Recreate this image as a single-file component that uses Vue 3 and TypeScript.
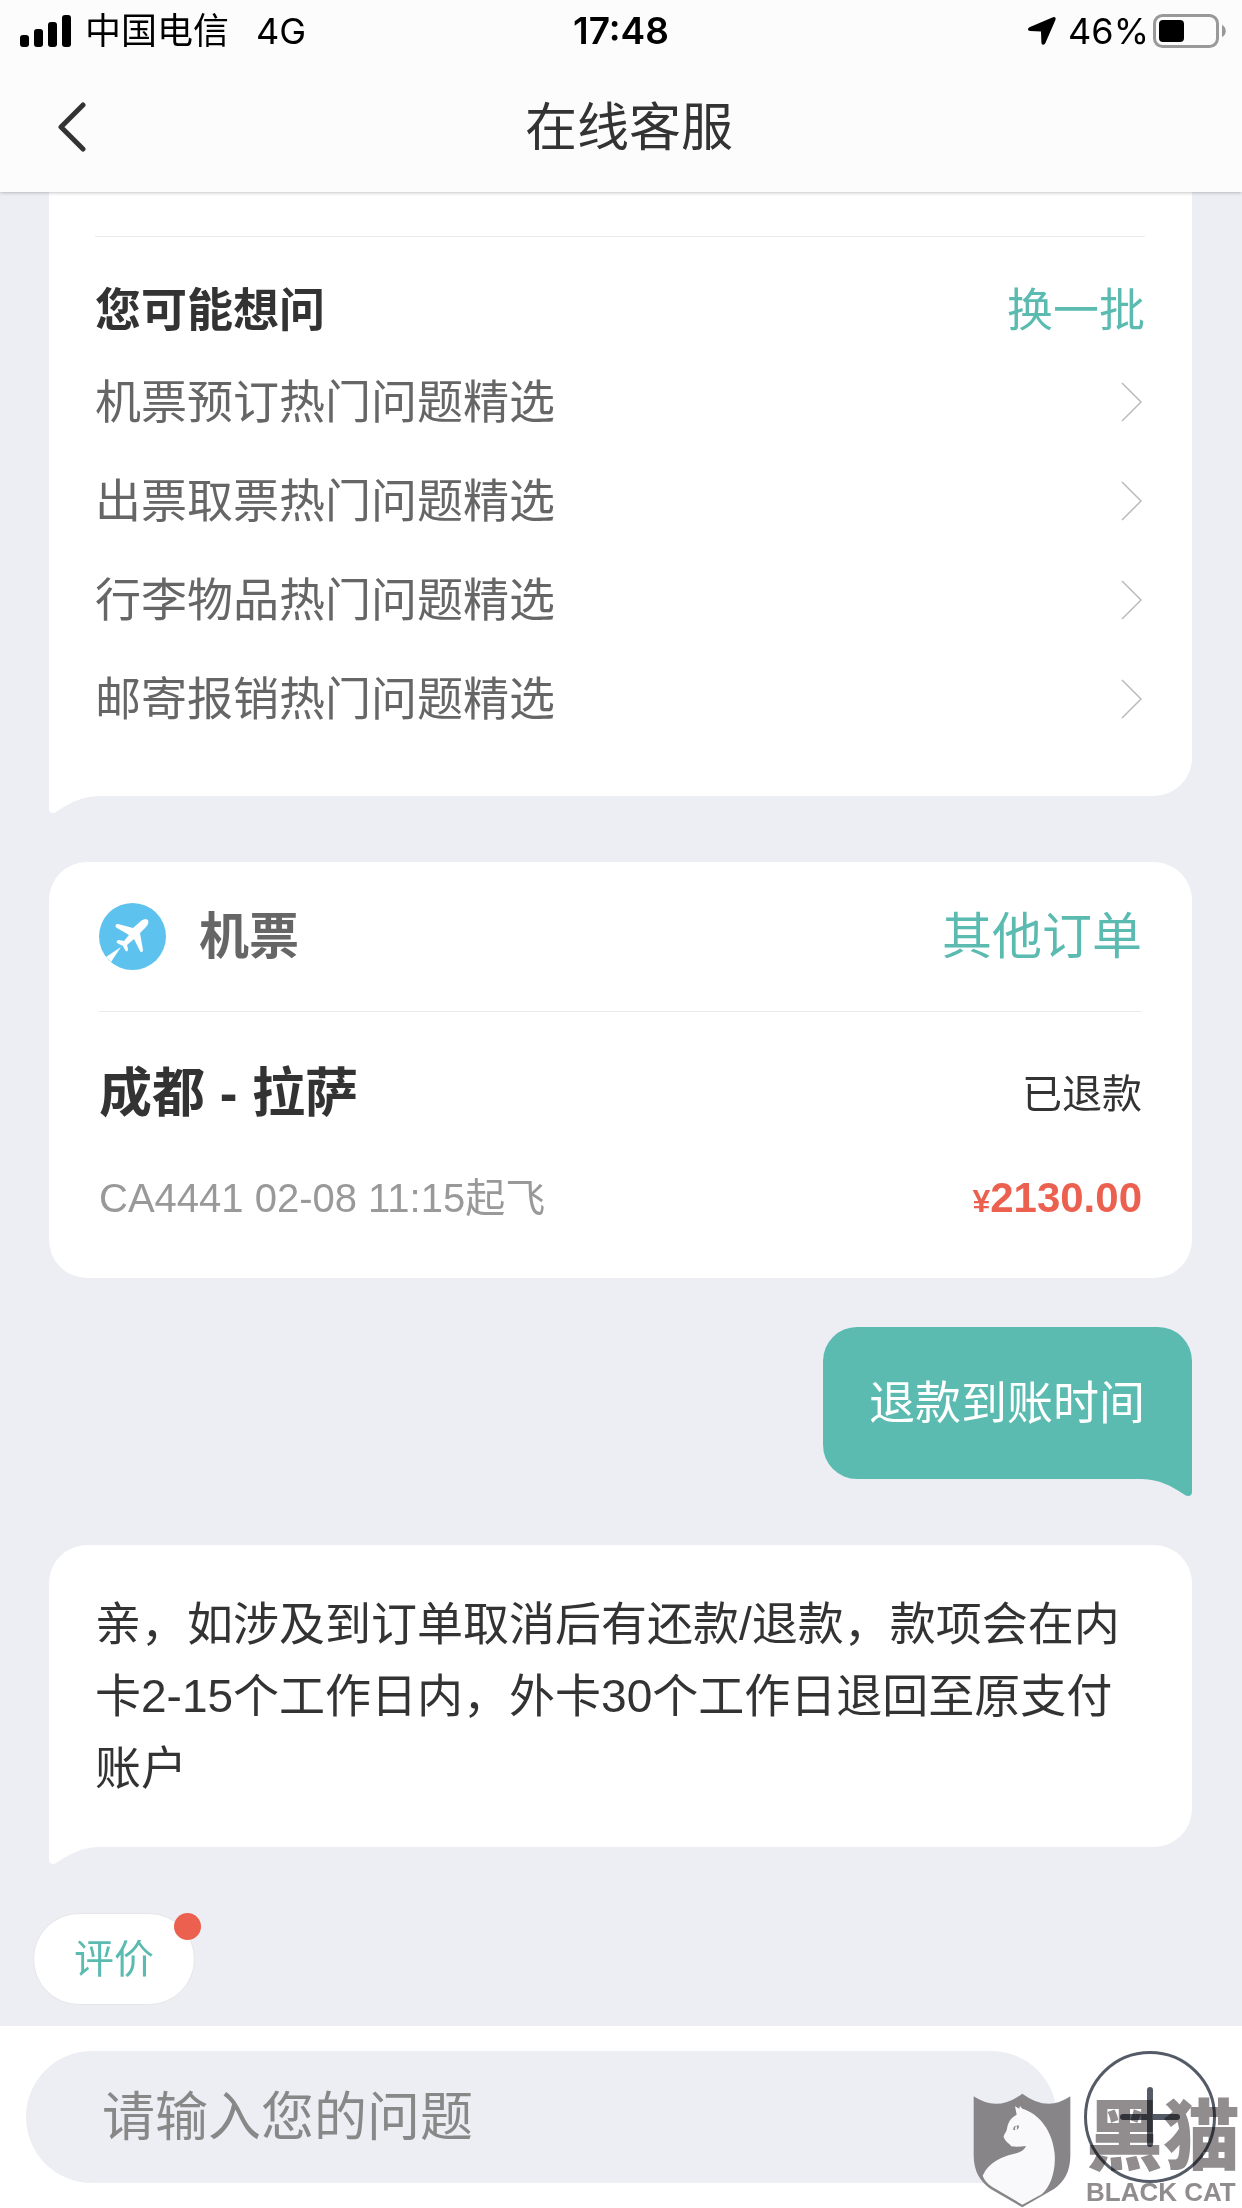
<script setup lang="ts">
import { ref } from 'vue'

interface Order {
  kind: string
  route: string
  status: string
  detail: string
  amount: string
}

const topics = ref<string[]>([
  '机票预订热门问题精选',
  '出票取票热门问题精选',
  '行李物品热门问题精选',
  '邮寄报销热门问题精选',
])

const order: Order = {
  kind: '机票',
  route: '成都 - 拉萨',
  status: '已退款',
  detail: 'CA4441 02-08 11:15起飞',
  amount: '2130.00',
}

const question = '退款到账时间'
const answer =
  '亲，如涉及到订单取消后有还款/退款，款项会在内卡2-15个工作日内，外卡30个工作日退回至原支付账户'
const draft = ref('')
</script>

<template>
  <div class="page">
    <header class="top">
      <div class="status">
        <div class="status-side">
          <svg class="signal" viewBox="0 0 52 33" aria-hidden="true">
            <rect x="0" y="20" width="9" height="12" rx="3" />
            <rect x="14" y="14" width="9" height="18" rx="3" />
            <rect x="28" y="7" width="9" height="25" rx="3" />
            <rect x="42" y="0" width="9" height="32" rx="3" />
          </svg>
          <span class="carrier">中国电信</span>
          <span>4G</span>
        </div>
        <time class="clock">17:48</time>
        <div class="status-side status-end">
          <svg class="locate" viewBox="0 0 28 28" aria-hidden="true">
            <path d="M25 0.300 L2 10 C-0.800 11.300-.5 14 2.200 14 L13 14.500 L13.400 25.500 C13.600 28.300 16.300 28.300 17.400 26 L27.400 3 C28.200 1 27-.5 25 .3Z" />
          </svg>
          <span>46%</span>
          <svg class="battery" viewBox="0 0 74 34" aria-hidden="true">
            <rect x="1.500" y="1.500" width="63" height="31" rx="8" fill="none" stroke="#999" stroke-width="3" />
            <rect x="6" y="6" width="25" height="22" rx="4" />
            <path d="M69 11 C74 13 74 21 69 23Z" fill="#999" />
          </svg>
        </div>
      </div>
      <nav class="nav">
        <button class="back" type="button" aria-label="返回">
          <svg viewBox="0 0 28 50" aria-hidden="true">
            <path d="M25 3 L3 25 L25 47" fill="none" stroke="#333" stroke-width="5" stroke-linecap="round" stroke-linejoin="round" />
          </svg>
        </button>
        <h1>在线客服</h1>
      </nav>
    </header>

    <main class="chat">
      <section class="message">
        <div class="bubble suggest">
          <div class="suggest-head">
            <h2>您可能想问</h2>
            <button class="link" type="button">换一批</button>
          </div>
          <ul>
            <li v-for="topic in topics" :key="topic">
              <a href="#">
                <span>{{ topic }}</span>
                <svg class="chevron" viewBox="0 0 22 40" aria-hidden="true">
                  <path d="M1 1 L20 20 L1 39" fill="none" stroke="#bbb" stroke-width="1.500" />
                </svg>
              </a>
            </li>
          </ul>
        </div>
        <svg class="tail" viewBox="0 0 50 17" aria-hidden="true">
          <path d="M0 0 H50 C32 1 22 6 7 16 C4 18 0 17 0 13Z" />
        </svg>
      </section>

      <section class="order">
        <div class="order-head">
          <svg class="plane" viewBox="0 0 67 67" aria-hidden="true">
            <circle cx="33.500" cy="33.500" r="33.500" fill="#5dc3ee" />
            <path fill="#fff" d="M49 17 C50 19 49 22 47 24 L41 30 L44 47 C44 49 42 50 41 48 L35 36 L28 42 L29 46 C29 49 27 49 26 47 L24 43 L18 40 C17 38 19 37 20 37 L25 38 L30 32 L18 25 C15 23 17 21 19 21 L34 25 L42 18 C44 16 48 16 49 17Z" />
            <path fill="#fff" d="M22 44 L7 54 L12 59Z" />
          </svg>
          <h2>{{ order.kind }}</h2>
          <button class="link" type="button">其他订单</button>
        </div>
        <div class="order-row">
          <strong class="route">{{ order.route }}</strong>
          <span class="state">{{ order.status }}</span>
        </div>
        <div class="order-row flight">
          <span class="detail">{{ order.detail }}</span>
          <span class="price"><small>¥</small>{{ order.amount }}</span>
        </div>
      </section>

      <section class="message mine">
        <div class="bubble">{{ question }}</div>
        <svg class="tail" viewBox="0 0 50 17" aria-hidden="true">
          <path d="M50 0 H0 C18 1 28 6 43 16 C46 18 50 17 50 13Z" />
        </svg>
      </section>

      <section class="message">
        <p class="bubble answer">{{ answer }}</p>
        <svg class="tail" viewBox="0 0 50 17" aria-hidden="true">
          <path d="M0 0 H50 C32 1 22 6 7 16 C4 18 0 17 0 13Z" />
        </svg>
      </section>

      <button class="rate" type="button">评价<i class="dot"></i></button>
    </main>

    <footer class="composer">
      <input v-model="draft" type="text" placeholder="请输入您的问题" aria-label="请输入您的问题" />
      <button class="add" type="button" aria-label="更多">
        <svg viewBox="0 0 132 132" aria-hidden="true">
          <circle cx="66" cy="66" r="64.500" fill="none" stroke="#555b66" stroke-width="3" />
          <path d="M39 66 H93 M66 39 V93" stroke="#555b66" stroke-width="6" stroke-linecap="round" />
        </svg>
      </button>
      <svg class="badge" viewBox="92 218 294 345" aria-hidden="true">
        <path fill="#878588" d="M94 228 Q165 276 240 220 Q315 276 384 228 V405 C384 455 365 485 335 506 L240 561 L145 506 C115 485 94 455 94 405Z" />
        <path fill="#f9f9fb" d="M121 466 C140 425 180 410 210 402 C235 396 245 390 251 377 C235 379 220 380 207 378 C203 370 189 366 184 350 C183 343 193 335 194 325 C198 300 210 290 223 283 L218 258 L231 265 L233 257 L240 265 C290 280 330 330 337 400 C341 450 325 500 298 522 L240 553 L150 500 C135 490 125 478 121 466Z" />
        <path fill="#878588" d="M213 329 C212 320 216 317 222 316 Q216 322 219 329Z M223 328 Q226 321 222 316 L229 315 C231 322 228 326 223 328Z" />
      </svg>
      <div class="watermark">
        <b>黑猫</b>
        <span>BLACK CAT</span>
      </div>
    </footer>
  </div>
</template>

<style>
body {
  margin: 0;
}
</style>

<style scoped>
.page {
  display: flex;
  flex-direction: column;
  min-height: 100vh;
  background: #edeef4;
  color: #333;
  font-family: 'Liberation Sans', 'Noto Sans CJK SC', sans-serif;
  font-size: 46px;
  line-height: 60px;
}

h1,
h2,
p,
ul {
  margin: 0;
  padding: 0;
  font-size: inherit;
}

svg {
  display: block;
  flex: none;
}

button {
  padding: 0;
  border: 0;
  background: none;
  color: inherit;
  font: inherit;
}

.top {
  position: relative;
  background: #fcfcfc;
  box-shadow: 0 0 4px rgba(0, 0, 0, 0.35);
}

.status {
  display: flex;
  align-items: center;
  height: 62px;
  padding: 0 15px;
  color: #000;
  font-family: Inter, 'Noto Sans CJK SC', sans-serif;
  font-size: 36px;
}

.status-side {
  display: flex;
  flex: 1;
  align-items: center;
}

.status-end {
  justify-content: flex-end;
}

.signal {
  width: 52px;
  height: 33px;
  margin-left: 5px;
}

.carrier {
  margin: 0 27px 0 13px;
}

.clock {
  font-size: 37px;
  font-weight: 600;
}

.locate {
  width: 28px;
  height: 28px;
  margin-right: 12px;
}

.battery {
  width: 74px;
  height: 34px;
  margin-left: 4px;
}

.nav {
  display: grid;
  grid-template-columns: 1fr auto 1fr;
  align-items: center;
  height: 130px;
  padding-left: 16px;
}

.back {
  width: 112px;
  padding-left: 42px;
}

.back svg {
  width: 28px;
  height: 50px;
}

.nav h1 {
  padding-top: 2px;
  font-size: 52px;
  font-weight: 400;
}

.chat {
  display: flex;
  flex: 1;
  flex-direction: column;
  gap: 49px;
  padding: 0 50px 20px 49px;
}

.bubble {
  padding: 46px;
  border-radius: 38px 38px 38px 0;
  background: #fff;
}

.tail {
  width: 50px;
  height: 17px;
  fill: #fff;
}

.suggest {
  padding: 44px 47px 48px 46px;
  border-top-left-radius: 0;
  border-top-right-radius: 0;
}

.suggest-head {
  display: flex;
  justify-content: space-between;
  padding: 43px 0 12px;
  border-top: 1px solid #ebebeb;
}

.link {
  color: #5bbbb0;
}

ul {
  list-style: none;
}

li a {
  display: flex;
  align-items: center;
  justify-content: space-between;
  height: 99px;
  padding-right: 2px;
  color: #666;
  text-decoration: none;
}

.chevron {
  width: 22px;
  height: 40px;
}

.order {
  padding: 0 50px 52px;
  border-radius: 38px;
  background: #fff;
}

.order-head {
  display: flex;
  align-items: center;
  padding: 41px 0;
  border-bottom: 1px solid #ebebeb;
  font-size: 50px;
  line-height: 64px;
}

.plane {
  width: 67px;
  height: 67px;
}

.order-head h2 {
  flex: 1;
  margin-left: 33px;
  color: #666;
}

.order-row {
  display: flex;
  align-items: center;
  justify-content: space-between;
  padding-top: 50px;
  line-height: 64px;
}

.route {
  font-size: 53px;
}

.state,
.detail {
  font-size: 40px;
}

.flight {
  padding-top: 44px;
  line-height: 56px;
}

.detail {
  color: #999;
}

.price {
  color: #eb604f;
  font-size: 42px;
  font-weight: 700;
}

.price small {
  font-size: 32px;
  line-height: 32px;
}

.mine {
  display: flex;
  flex-direction: column;
  align-items: flex-end;
}

.mine .bubble {
  padding-right: 47px;
  border-radius: 34px 34px 0 34px;
  background: #5bbbb0;
  color: #fff;
}

.mine .tail {
  fill: #5bbbb0;
}

.answer {
  padding: 43px 46px;
  line-height: 72px;
}

.rate {
  position: relative;
  align-self: flex-start;
  width: 162px;
  height: 92px;
  margin-left: -16px;
  border: 1px solid #e6e6e8;
  border-radius: 46px;
  background: #fff;
  color: #5bbbb0;
  font-size: 40px;
}

.dot {
  position: absolute;
  top: -1px;
  right: -7px;
  width: 27px;
  height: 27px;
  border-radius: 50%;
  background: #eb604f;
}

.composer {
  position: relative;
  display: flex;
  gap: 27px;
  padding: 25px 26px;
  background: #fff;
}

.composer input {
  box-sizing: border-box;
  flex: 1;
  min-width: 0;
  height: 132px;
  padding: 0 76px;
  border: 0;
  border-radius: 66px;
  background: #edeef4;
  color: #333;
  font: inherit;
  font-size: 53px;
}

.composer input::placeholder {
  color: #888;
  opacity: 1;
}

.add,
.add svg {
  width: 132px;
  height: 132px;
}

.badge {
  position: absolute;
  right: 171px;
  bottom: 0;
  width: 98px;
  height: 115px;
}

.watermark {
  position: absolute;
  right: 2px;
  bottom: 0;
  display: flex;
  flex-direction: column;
  color: #918d8f;
  font-weight: 700;
  mix-blend-mode: multiply;
  pointer-events: none;
}

.watermark b {
  font-size: 77px;
  font-weight: 900;
  line-height: 77px;
}

.watermark span {
  font-size: 26px;
  line-height: 32px;
}
</style>
